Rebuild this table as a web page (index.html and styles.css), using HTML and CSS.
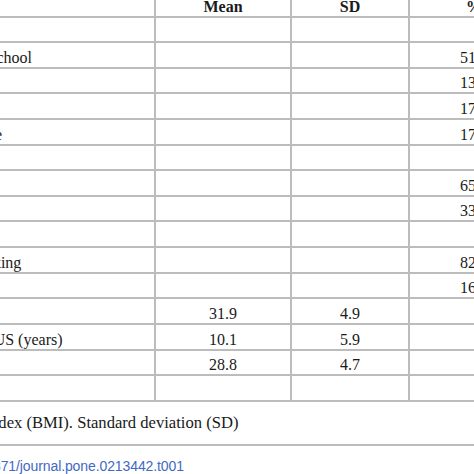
FILE: index.html
```html
<!DOCTYPE html>
<html lang="en">
<head>
<meta charset="utf-8">
<title>Table 1</title>
<link rel="stylesheet" href="styles.css">
</head>
<body>
<div class="page">
  <div class="table">
    <div class="cell label"></div><div class="cell head">Mean</div><div class="cell head">SD</div><div class="cell head last">%</div>
    <div class="cell label">School</div><div class="cell"></div><div class="cell"></div><div class="cell last"></div>
    <div class="cell label">Middle school</div><div class="cell"></div><div class="cell"></div><div class="cell last">51.7</div>
    <div class="cell label">Primary</div><div class="cell"></div><div class="cell"></div><div class="cell last">13.8</div>
    <div class="cell label">Higher</div><div class="cell"></div><div class="cell"></div><div class="cell last">17.2</div>
    <div class="cell label">Associate</div><div class="cell"></div><div class="cell"></div><div class="cell last">17.2</div>
    <div class="cell label">Status</div><div class="cell"></div><div class="cell"></div><div class="cell last"></div>
    <div class="cell label">Married</div><div class="cell"></div><div class="cell"></div><div class="cell last">65.5</div>
    <div class="cell label">Single</div><div class="cell"></div><div class="cell"></div><div class="cell last">33.3</div>
    <div class="cell label">Work</div><div class="cell"></div><div class="cell"></div><div class="cell last"></div>
    <div class="cell label">Not working</div><div class="cell"></div><div class="cell"></div><div class="cell last">82.8</div>
    <div class="cell label">Working</div><div class="cell"></div><div class="cell"></div><div class="cell last">16.1</div>
    <div class="cell label">Age</div><div class="cell">31.9</div><div class="cell">4.9</div><div class="cell last"></div>
    <div class="cell label">Time in US (years)</div><div class="cell">10.1</div><div class="cell">5.9</div><div class="cell last"></div>
    <div class="cell label">BMI</div><div class="cell">28.8</div><div class="cell">4.7</div><div class="cell last"></div>
    <div class="cell label"></div><div class="cell"></div><div class="cell"></div><div class="cell last"></div>
  </div>
  <p class="note">Body mass index (BMI). Standard deviation (SD)</p>
  <div class="rule"></div>
  <a class="doi" href="#">https://doi.org/10.1371/journal.pone.0213442.t001</a>
</div>
</body>
</html>
```
FILE: styles.css
```css
html, body {
  margin: 0;
  padding: 0;
  background: #ffffff;
  overflow: hidden;
}
.page {
  width: 474px;
  height: 474px;
  overflow: hidden;
  font-family: "Liberation Serif", "Times New Roman", serif;
  font-size: 16px;
  color: #1a1a1a;
}
.table {
  display: grid;
  grid-template-columns: 224px 136px 118px 128px;
  grid-auto-rows: 25.62px;
  margin: -8px 0 0 -68px;
  width: 606px;
}
.cell {
  box-sizing: border-box;
  border-bottom: 2px solid #bcbcbc;
  border-right: 2px solid #bcbcbc;
  display: flex;
  align-items: flex-end;
  justify-content: center;
  line-height: 16px;
  padding-bottom: 1px;
  white-space: nowrap;
}
.cell.last {
  border-right: none;
}
.cell.label {
  justify-content: flex-start;
  padding-left: 8px;
  overflow: hidden;
}
.cell.head {
  font-weight: bold;
}
.note {
  margin: 13.7px 0 0 -92px;
  font-size: 16.6px;
  line-height: 16px;
  white-space: nowrap;
}
.rule {
  margin-top: 12.4px;
  border-top: 2px solid #bcbcbc;
}
.doi {
  display: block;
  margin: 12px 0 0 -121px;
  font-family: "Liberation Sans", Arial, sans-serif;
  font-size: 14px;
  letter-spacing: -0.1px;
  line-height: 16px;
  color: #4169c4;
  text-decoration: none;
  white-space: nowrap;
}
```
